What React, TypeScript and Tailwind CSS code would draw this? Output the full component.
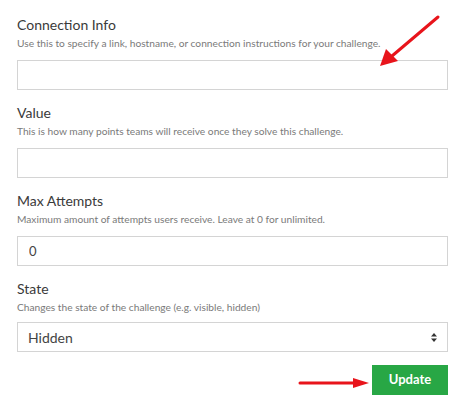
import { useState } from "react";

const fields = [
  {
    label: "Connection Info",
    help: "Use this to specify a link, hostname, or connection instructions for your challenge.",
    value: "",
  },
  {
    label: "Value",
    help: "This is how many points teams will receive once they solve this challenge.",
    value: "",
  },
  {
    label: "Max Attempts",
    help: "Maximum amount of attempts users receive. Leave at 0 for unlimited.",
    value: "0",
  },
];

const App = () => {
  const [values, setValues] = useState(fields.map((f) => f.value));
  const [state, setState] = useState("hidden");

  return (
    <div
      className="relative min-h-[412px] w-full bg-white px-[17px] pt-[15px]"
      style={{ fontFamily: "Lato, 'Open Sans', sans-serif" }}
    >
      {fields.map((f, index) => (
        <div key={f.label} className="mb-[13px]">
          <label className="block text-[14px] leading-[20px] text-[#3a3a3a]">
            {f.label}
          </label>
          <p className="mt-[1px] text-[10.2px] leading-[15px] text-[#7a7a7a]">
            {f.help}
          </p>
          <input
            type="text"
            className="mt-[9px] block h-[30px] w-full border border-[#d4d4d4] px-[11px] text-[13px] text-[#444] outline-none"
            value={values[index]}
            onChange={(e) =>
              setValues(values.map((v, i) => (i === index ? e.target.value : v)))
            }
          />
        </div>
      ))}

      <div>
        <label className="block text-[14px] leading-[20px] text-[#3a3a3a]">
          State
        </label>
        <p className="mt-[1px] text-[10.2px] leading-[15px] text-[#7a7a7a]">
          Changes the state of the challenge (e.g. visible, hidden)
        </p>
        <div className="relative mt-[7px]">
          <select
            className="block h-[30px] w-full appearance-none border border-[#d4d4d4] bg-white px-[10px] text-[14px] text-[#444] outline-none"
            value={state}
            onChange={(e) => setState(e.target.value)}
          >
            <option value="hidden">Hidden</option>
            <option value="visible">Visible</option>
          </select>
          {/* up/down caret */}
          <svg
            className="pointer-events-none absolute right-[11px] top-[11px]"
            width="6"
            height="9"
            viewBox="0 0 6 9"
          >
            <path d="M3 0 L6 3.5 H0 Z" fill="#333" />
            <path d="M3 9 L6 5.5 H0 Z" fill="#333" />
          </svg>
        </div>
      </div>

      <div className="mt-[13px] flex justify-end">
        <button className="h-[30px] w-[76px] bg-[#28a745] text-[13px] font-bold text-white">
          Update
        </button>
      </div>

      {/* annotation arrows */}
      <svg
        className="pointer-events-none absolute left-0 top-0"
        width="465"
        height="412"
        viewBox="0 0 465 412"
      >
        <line x1="438" y1="17" x2="392" y2="56" stroke="#e8141b" strokeWidth="3" strokeLinecap="round" />
        <path d="M380 66 L386 49 L398 61 Z" fill="#e8141b" />
        <line x1="300" y1="383" x2="356" y2="383" stroke="#e8141b" strokeWidth="3" strokeLinecap="round" />
        <path d="M369 383 L353 378 L353 388 Z" fill="#e8141b" />
      </svg>
    </div>
  );
};

export default App;
